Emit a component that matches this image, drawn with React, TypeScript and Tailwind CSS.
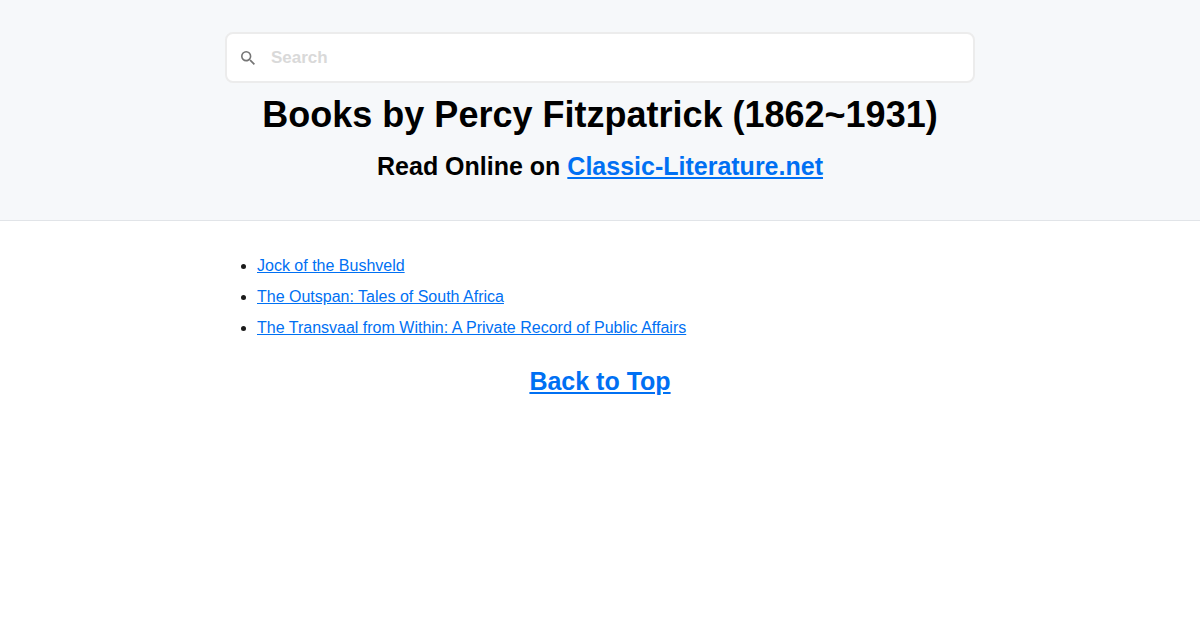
import { useState } from "react";

interface Book {
  title: string;
  slug: string;
}

const books: Book[] = [
  { title: "Jock of the Bushveld", slug: "jock-of-the-bushveld" },
  { title: "The Outspan: Tales of South Africa", slug: "the-outspan" },
  { title: "The Transvaal from Within: A Private Record of Public Affairs", slug: "the-transvaal-from-within" },
];

const SearchBox = () => {
  const [query, setQuery] = useState("");

  return (
    <form
      role="search"
      onSubmit={(e) => e.preventDefault()}
      className="flex h-[51px] items-center gap-4 rounded-lg border-2 border-[#ececec] bg-white pl-3.5"
    >
      <label htmlFor="search" className="shrink-0">
        <svg viewBox="3 3 17.5 17.5" className="h-3.5 w-3.5 fill-[#757575]" role="img" aria-label="Search">
          <path d="M15.5 14h-.79l-.28-.27A6.471 6.471 0 0 0 16 9.5 6.5 6.5 0 1 0 9.5 16c1.61 0 3.09-.59 4.23-1.57l.27.28v.79l5 4.99L20.49 19l-4.99-5zm-6 0C7.01 14 5 11.99 5 9.5S7.01 5 9.5 5 14 7.01 14 9.5 11.99 14 9.5 14z" />
        </svg>
      </label>
      <input
        id="search"
        type="text"
        value={query}
        onChange={(e) => setQuery(e.target.value)}
        placeholder="Search"
        className="min-w-0 flex-1 bg-transparent text-[17px] font-bold text-black outline-none placeholder:text-[#d9d9d9]"
      />
    </form>
  );
};

const App = () => {
  return (
    <div className="bg-white font-['Liberation_Sans',Arial,sans-serif] text-black">
      <header id="top" className="border-b border-[#e1e4e8] bg-[#f6f8fa] px-4 pt-8 pb-9">
        <div className="mx-auto max-w-[750px]">
          <SearchBox />
          <h1 className="mt-2 text-center text-4xl leading-[48px] font-bold">
            Books by Percy Fitzpatrick (1862~1931)
          </h1>
          <h2 className="mt-2.5 text-center text-[25px] leading-[35px] font-bold">
            Read Online on{" "}
            <a href="#home" className="text-[#0070f3] underline">
              Classic-Literature.net
            </a>
          </h2>
        </div>
      </header>

      <main className="mx-auto max-w-[782px] px-4 pt-[29px] pb-8 text-[#1b1b1b]">
        <ul className="list-disc pl-8 text-base leading-[31px]">
          {books.map((book) => (
            <li key={book.slug}>
              <a href={`#${book.slug}`} className="text-[#0070f3] underline">
                {book.title}
              </a>
            </li>
          ))}
        </ul>
        <h2 className="mt-[21px] text-center text-[25px] leading-[35px] font-bold">
          <a href="#top" className="text-[#0070f3] underline">
            Back to Top
          </a>
        </h2>
      </main>
    </div>
  );
};

export default App;
